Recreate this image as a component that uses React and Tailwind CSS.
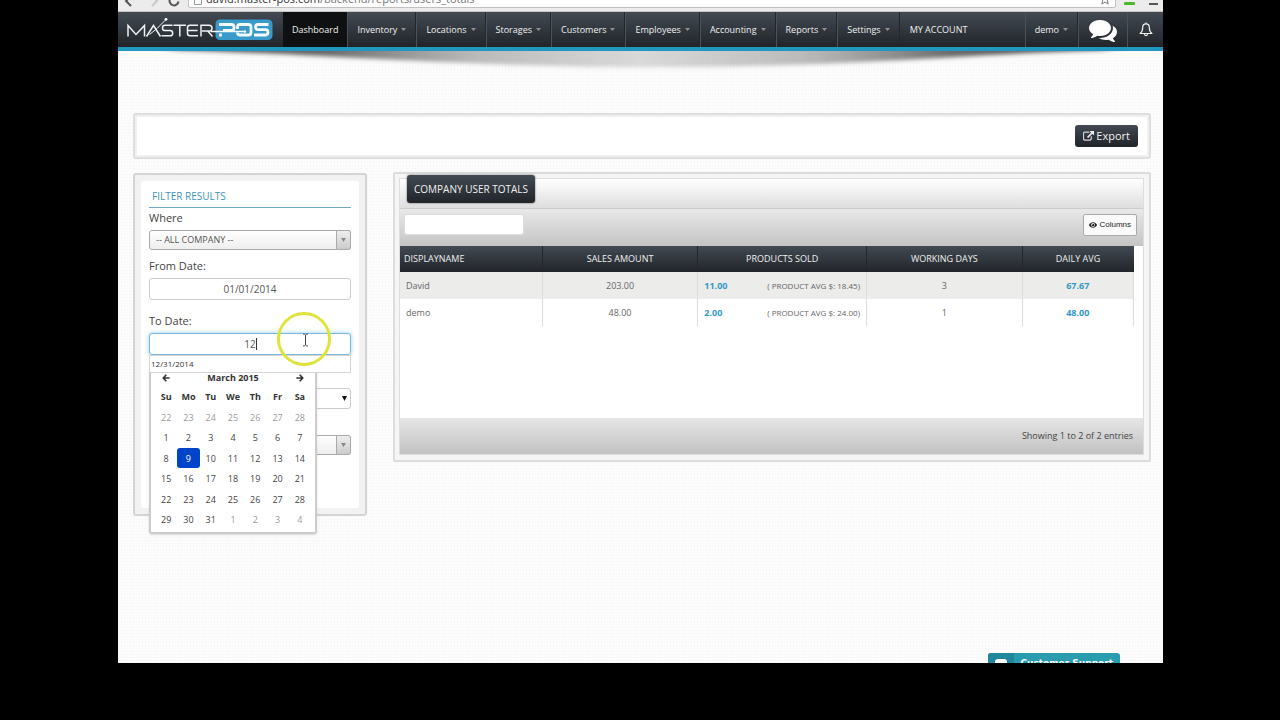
import React from "react";
import { FaEye } from "react-icons/fa";

const NAV = ["Inventory", "Locations", "Storages", "Customers", "Employees", "Accounting", "Reports", "Settings"];

const ROWS = [
  { name: "David", sales: "203.00", sold: "11.00", avg: "( PRODUCT AVG $: 18.45)", days: "3", daily: "67.67" },
  { name: "demo", sales: "48.00", sold: "2.00", avg: "( PRODUCT AVG $: 24.00)", days: "1", daily: "48.00" },
];

const WEEKDAYS = ["Su", "Mo", "Tu", "We", "Th", "Fr", "Sa"];
const WEEKS = [
  [22, 23, 24, 25, 26, 27, 28],
  [1, 2, 3, 4, 5, 6, 7],
  [8, 9, 10, 11, 12, 13, 14],
  [15, 16, 17, 18, 19, 20, 21],
  [22, 23, 24, 25, 26, 27, 28],
  [29, 30, 31, 1, 2, 3, 4],
];

function Caret({ className }) {
  return (
    <svg viewBox="0 0 6 3" preserveAspectRatio="none" className={className} aria-hidden="true">
      <path d="M0 0h6L3 3z" fill="currentColor" />
    </svg>
  );
}

function CommentsIcon() {
  return (
    <svg viewBox="0 0 1792 1792" className="size-7" fill="currentColor" aria-hidden="true">
      <path d="M1408 768q0 139-94 257t-256.5 186.5-353.5 68.5q-86 0-176-16-124 88-278 128-36 9-86 16h-3q-11 0-20.5-8t-11.5-21q-1-3-1-6.5t.5-6.5 2-6l2.5-5 3.5-5.5 4-5 4.5-5 4-4.5q5-6 23-25t26-29.5 22.5-29 25-38.5 20.5-44q-124-72-195-177t-71-224q0-139 94-257t256.5-186.5 353.5-68.5 353.5 68.5 256.5 186.5 94 257zm384 256q0 120-71 224.5t-195 176.5q10 24 20.5 44t25 38.5 22.5 29 26 29.5 23 25q1 1 4 4.5t4.5 5 4 5 3.5 5.5l2.5 5 2 6 .5 6.5-1 6.5q-3 14-13 22t-22 7q-50-7-86-16-154-40-278-128-90 16-176 16-271 0-472-132 58 4 88 4 161 0 309-45t264-129q125-92 192-212t67-254q0-77-23-152 129 71 204 178t75 230z" />
    </svg>
  );
}

function BellIcon() {
  return (
    <svg viewBox="0 0 14 15" className="h-[15px] w-[14px]" fill="none" stroke="currentColor" strokeWidth="1.2" aria-hidden="true">
      <path d="M7 1.8C4.6 1.8 3.7 3.6 3.7 5.4c0 3-.9 4.8-2.6 6.1h11.8c-1.700-1.300-2.600-3.100-2.600-6.100 0-1.800-.9-3.600-3.300-3.600z" strokeLinejoin="round" />
      <path d="M7 .4v1.400M5.500 12c.2 1.200.8 1.700 1.500 1.700s1.300-.5 1.500-1.700" />
    </svg>
  );
}

function ExportIcon() {
  return (
    <svg viewBox="0 0 1792 1792" className="size-[11px]" fill="currentColor" aria-hidden="true">
      <path d="M1408 928v320q0 119-84.500 203.500t-203.500 84.500h-832q-119 0-203.500-84.500t-84.500-203.500v-832q0-119 84.500-203.500t203.500-84.500h704q14 0 23 9t9 23v64q0 14-9 23t-23 9h-704q-66 0-113 47t-47 113v832q0 66 47 113t113 47h832q66 0 113-47t47-113v-320q0-14 9-23t23-9h64q14 0 23 9t9 23zm384-864v512q0 26-19 45t-45 19-45-19l-176-176-652 652q-10 10-23 10t-23-10l-114-114q-10-10-10-23t10-23l652-652-176-176q-19-19-19-45t19-45 45-19h512q26 0 45 19t19 45z" stroke="currentColor" strokeWidth="50" />
    </svg>
  );
}

function ArrowIcon({ className }) {
  return (
    <svg viewBox="0 0 10 10" className={className} fill="none" stroke="currentColor" strokeWidth="2" aria-hidden="true">
      <path d="M5.400 1L1.600 5l3.800 4M1.800 5h7.700" />
    </svg>
  );
}

function Logo() {
  return (
    <a href="#home" aria-label="Master POS" className="flex h-full w-[165px] shrink-0 items-center pl-2">
      <svg viewBox="0 0 148 26" className="h-[26px] w-[148px]" aria-hidden="true">
        <g fill="none" stroke="#eef1f3" strokeWidth="1.500">
          <path d="M2 19.500V8.500L10 17.500 18.500 8.500V19.500" />
          <path d="M20.500 19.500L27.500 8.500 34.500 19.500" />
          <path d="M23.500 17.500L31 11.500 39.500 3" strokeWidth="1" />
          <path d="M46.500 8.300H39q-2.500 0-2.500 2.600t2.500 2.700h5q2.700 0 2.700 2.600t-2.700 2.600H35.500" />
          <path d="M47.500 8.300h12.500M53.800 8.300V19.500" />
          <path d="M72 8.300H64q-2.500 0-2.500 2.500v5.500q0 2.500 2.500 2.500h8M61.500 13.500H71.500" />
          <path d="M75 19.500V8.300h8q3 0 3 2.900t-3 2.900h-7M82 14.200l4.500 5.300" />
        </g>
        <circle cx="40" cy="2.300" r="1.400" fill="#fff" />
        <rect x="89.500" y="2.500" width="57" height="20.500" rx="4.500" fill="#3a9aca" />
        <g fill="none" stroke="#f4fafd" strokeWidth="2.800">
          <path d="M93 7.500h12.500q2.500 0 2.500 2.500v1q0 2.500-2.500 2.500H97" />
          <path d="M94.500 16.500v3" />
          <path d="M111.500 12V10q0-2.500 2.500-2.500h8.500q2.500 0 2.500 2.500v5.500q0 2.500-2.500 2.500H114q-2.500 0-2.500-2.500" />
          <path d="M142.500 7.500H132q-2.500 0-2.500 2.500t2.500 2.700h7.500q2.500 0 2.500 2.600t-2.500 2.700H128" />
        </g>
        <path d="M85 14.500h34" stroke="#f4fafd" strokeWidth="1.300" />
        <circle cx="119" cy="14.500" r="1.200" fill="#f4fafd" />
      </svg>
    </a>
  );
}

function BrowserBar() {
  return (
    <div className="flex h-3 shrink-0 items-end overflow-hidden border-b border-[#c4c4c4] bg-[#ececec] pr-[5px] pb-[3px] text-[#555]">
      <div className="flex w-[70px] shrink-0 items-end gap-[13px] pl-[6px]">
        <svg viewBox="0 0 12 12" className="size-3" fill="none" stroke="currentColor" strokeWidth="2" aria-hidden="true">
          <path d="M7 0L2 5l5 5" />
        </svg>
        <svg viewBox="0 0 12 12" className="size-3 text-[#c8c8c8]" fill="none" stroke="currentColor" strokeWidth="2" aria-hidden="true">
          <path d="M3 0l5 5-5 5" />
        </svg>
        <svg viewBox="0 0 12 12" className="-ml-[6px] size-3" fill="none" stroke="currentColor" strokeWidth="2" aria-hidden="true">
          <path d="M10.500 5.500a4.500 4.500 0 1 1-1.500-4" />
        </svg>
      </div>
      <div className="flex h-[18px] min-w-0 flex-1 items-center rounded-[2px] border border-[#c0c0c0] bg-white px-1">
        <svg viewBox="0 0 10 12" className="h-3 w-[10px] text-[#999]" fill="none" stroke="currentColor" aria-hidden="true">
          <path d="M1.500.5h5l2 2v9h-7z" />
        </svg>
        <div className="flex-1 pl-[3px] text-[11px] leading-4 whitespace-nowrap text-[#777]">
          <span className="text-[#333]">david.master-pos.com</span>/backend/reports/users_totals
        </div>
        <svg viewBox="0 0 12 12" className="size-3 text-[#777]" fill="none" stroke="currentColor" aria-hidden="true">
          <path d="M6 1l1.500 3.500 3.500.3-2.700 2.400.9 3.800L6 9l-3.200 2 .9-3.800L1 4.800l3.500-.3z" />
        </svg>
      </div>
      <div className="ml-2 flex h-[9px] items-center gap-[14px]">
        <span className="h-[3px] w-[11px] rounded-[1px] bg-[#4db82f]" />
        <span className="h-[2px] w-[9px] bg-[#555]" />
      </div>
    </div>
  );
}

function NavLink({ children, caret }) {
  return (
    <a href="#menu" className="flex h-full items-center gap-1 border-r border-[#23272b] pr-[9px] pl-[10px] shadow-[inset_1px_0_0_#4a525a]">
      {children}
      {caret && <Caret className="h-[3px] w-[5px] text-[#8b9196]" />}
    </a>
  );
}

function HeaderShadow() {
  return (
    <svg viewBox="0 0 1045 30" preserveAspectRatio="none" className="block h-[30px] w-full overflow-hidden" aria-hidden="true">
      <defs>
        <linearGradient id="shade">
          <stop offset="0" stopColor="#333" stopOpacity="0.900" />
          <stop offset="0.180" stopColor="#444" stopOpacity="0.800" />
          <stop offset="0.330" stopColor="#777" stopOpacity="0.500" />
          <stop offset="0.500" stopColor="#999" stopOpacity="0.350" />
          <stop offset="0.670" stopColor="#777" stopOpacity="0.500" />
          <stop offset="0.820" stopColor="#444" stopOpacity="0.800" />
          <stop offset="1" stopColor="#333" stopOpacity="0.900" />
        </linearGradient>
        <filter id="soften" x="-5%" y="-50%" width="110%" height="200%">
          <feGaussianBlur stdDeviation="6 2" />
        </filter>
      </defs>
      <path d="M30 -6L60 -1C200 3 330 15 522 16S850 3 985 -1L1015 -6z" fill="url(#shade)" filter="url(#soften)" />
    </svg>
  );
}

function Header() {
  return (
    <header className="shrink-0">
      <nav className="flex h-[39px] items-center border-b-4 border-[#2097bd] bg-linear-to-b from-[#434a53] to-[#21252a] text-[9px] font-medium text-[#f0f0f0]">
        <Logo />
        <a href="#dashboard" className="flex h-full items-center bg-[#0f1012] px-[9px]">
          Dashboard
        </a>
        {NAV.map((n) => (
          <NavLink key={n} caret>
            {n}
          </NavLink>
        ))}
        <a href="#account" className="flex h-full flex-1 items-center px-[10px]">
          MY ACCOUNT
        </a>
        <NavLink caret>demo</NavLink>
        <button type="button" aria-label="Messages" className="flex h-full w-[49px] items-center justify-center border-l border-[#4a525a] text-white">
          <CommentsIcon />
        </button>
        <button type="button" aria-label="Notifications" className="flex h-full w-9 items-center justify-center border-l border-[#4a525a]">
          <BellIcon />
        </button>
      </nav>
      <HeaderShadow />
    </header>
  );
}

function SelectBox({ id, label, children }) {
  return (
    <div className="relative">
      <select
        id={id}
        aria-label={label}
        className="block h-5 w-full appearance-none rounded-[3px] border border-[#aaa] bg-linear-to-b from-white to-[#eee] pl-[6px] text-[9px] text-[#555]"
      >
        {children}
      </select>
      <span className="pointer-events-none absolute inset-y-0 right-0 flex w-[15px] items-center justify-center rounded-r-[3px] border border-[#aaa] bg-linear-to-b from-[#eee] to-[#ccc]">
        <Caret className="h-1 w-[5px] text-[#888]" />
      </span>
    </div>
  );
}

function Calendar() {
  return (
    <div className="-mt-1 w-[168px] rounded-b-[3px] border-2 border-t-0 border-[#ccc] bg-white px-1 pb-[2px] shadow-sm">
      <div className="flex h-[18px] items-center justify-between px-[7px] text-[9px] font-bold text-[#333]">
        <button type="button" aria-label="Previous month">
          <ArrowIcon className="size-2" />
        </button>
        <span>March 2015</span>
        <button type="button" aria-label="Next month">
          <ArrowIcon className="size-2 rotate-180" />
        </button>
      </div>
      <table className="h-[143px] w-full table-fixed text-center text-[9px] text-[#444]">
        <thead>
          <tr className="h-5">
            {WEEKDAYS.map((d) => (
              <th key={d} className="p-0 font-bold text-[#333]">
                {d}
              </th>
            ))}
          </tr>
        </thead>
        <tbody>
          {WEEKS.map((week, w) => (
            <tr key={w}>
              {week.map((d, i) => {
                const outside = (w === 0 && d > 20) || (w === 5 && d < 10);
                const selected = w === 2 && d === 9;
                return (
                  <td key={i} className={outside ? "p-0 text-[#999]" : "p-0"}>
                    <button
                      type="button"
                      className={selected ? "block h-5 w-full rounded-[3px] bg-[#0044cc] text-white" : "block h-5 w-full"}
                    >
                      {d}
                    </button>
                  </td>
                );
              })}
            </tr>
          ))}
        </tbody>
      </table>
    </div>
  );
}

function FilterPanel() {
  return (
    <aside className="mt-px w-[234px] shrink-0 rounded-[3px] border-2 border-[#d4d4d4] bg-[#f2f2f2] p-[6px]">
      <form className="h-[327px] rounded-[3px] bg-white px-2 pt-[6px] text-[11px] text-[#444]">
        <h2 className="border-b border-[#6fa9c4] px-[3px] pt-px pb-[3px] text-[10px] leading-4 text-[#3d94b8]">FILTER RESULTS</h2>
        <label htmlFor="where" className="mt-[2px] mb-1 block leading-4">
          Where
        </label>
        <SelectBox id="where">
          <option>-- ALL COMPANY --</option>
        </SelectBox>
        <label htmlFor="from" className="mt-2 mb-1 block leading-4">
          From Date:
        </label>
        <input
          id="from"
          defaultValue="01/01/2014"
          className="block h-[22px] w-full rounded-[3px] border border-[#ccc] bg-white text-center text-[10px] text-[#555]"
        />
        <label htmlFor="to" className="mt-[13px] mb-1 block leading-4">
          To Date:
        </label>
        <div className="relative">
          <input
            id="to"
            defaultValue="12"
            className="block h-[22px] w-full rounded-[3px] border border-[#7cb8e0] bg-white text-center text-[10px] text-[#555] shadow-[0_0_4px_#8fd0f5] outline-none"
          />
          <span className="pointer-events-none absolute inset-y-[5px] left-1/2 ml-[6px] w-px bg-[#333]" />
          <div className="absolute inset-x-0 top-full z-10">
            <div className="relative z-10 h-[18px] border border-[#d4d4d4] bg-white px-px text-[8px] leading-4 text-[#333]">12/31/2014</div>
            <Calendar />
          </div>
          <svg viewBox="0 0 56 56" className="pointer-events-none absolute -top-[22px] right-[19px] z-20 size-14" fill="none" aria-hidden="true">
            <circle cx="28" cy="28" r="25.500" stroke="#dfe33a" strokeWidth="3" />
            <path d="M27 23q2 0 2.500 1 .5-1 2.500-1M29.500 24v10M27 35q2 0 2.500-1 .5 1 2.500 1" stroke="#444" />
          </svg>
        </div>
        <div className="relative mt-[33px] mb-[26px]">
          <select aria-label="Group by" className="block h-[21px] w-full appearance-none rounded-[3px] border border-[#ccc] bg-white" />
          <span className="pointer-events-none absolute inset-y-0 right-1 flex items-center text-[#111]">
            <Caret className="h-[5px] w-[5px]" />
          </span>
        </div>
        <SelectBox label="User" />
      </form>
    </aside>
  );
}

function Totals() {
  return (
    <section className="min-w-0 flex-1 rounded-[2px] border-2 border-[#dcdcdc] bg-[#f5f5f5] pt-1 pr-[5px] pb-[5px] pl-1">
      <div className="border border-[#ddd] bg-white">
        <div className="flex h-[30px] items-start border-b border-[#ccc] bg-linear-to-b from-white to-[#dedede] pl-[7px]">
          <h2 className="-mt-1 flex h-7 items-center rounded-[3px] bg-linear-to-b from-[#434a53] to-[#21252a] px-[7px] text-[10px] text-[#f0f0f0] shadow-[0_0_2px_#555]">
            COMPANY USER TOTALS
          </h2>
        </div>
        <div className="flex h-[37px] items-start justify-between bg-linear-to-b from-[#e9e9e9] to-[#c4c4c4] pt-[5px] pr-[6px] pl-1">
          <input aria-label="Search" className="h-[21px] w-[120px] rounded-[3px] border border-[#ddd] bg-white px-1 text-[10px]" />
          <button
            type="button"
            className="flex h-[22px] items-center gap-[2px] rounded-[2px] border border-[#aaa] bg-[#fafafa] px-[5px] font-['Liberation_Sans',sans-serif] text-[8px] text-[#222]"
          >
            <FaEye className="size-2" />
            Columns
          </button>
        </div>
        <div className="h-[172px] pr-[9px]">
          <table className="w-full table-fixed border-collapse text-[9px] text-[#666]">
            <colgroup>
              <col className="w-[19.400%]" />
              <col className="w-[21.200%]" />
              <col className="w-[23%]" />
              <col className="w-[21.200%]" />
              <col className="w-[15.200%]" />
            </colgroup>
            <thead className="bg-linear-to-b from-[#434a53] to-[#21252a] text-[#f0f0f0]">
              <tr className="h-[26px]">
                <th className="p-0 pl-1 text-left font-normal">DISPLAYNAME</th>
                <th className="border-l border-[#23272b] p-0 font-normal">SALES AMOUNT</th>
                <th className="border-l border-[#23272b] p-0 font-normal">PRODUCTS SOLD</th>
                <th className="border-l border-[#23272b] p-0 font-normal">WORKING DAYS</th>
                <th className="border-l border-[#23272b] p-0 font-normal">DAILY AVG</th>
              </tr>
            </thead>
            <tbody>
              {ROWS.map((r) => (
                <tr key={r.name} className="h-[27px] text-center odd:bg-[#ececeb]">
                  <td className="p-0 pl-[6px] text-left">{r.name}</td>
                  <td className="border-l border-[#ddd] p-0">{r.sales}</td>
                  <td className="border-l border-[#ddd] px-[6px] py-0">
                    <div className="flex items-center justify-between">
                      <span className="font-bold text-[#3399c4]">{r.sold}</span>
                      <span className="text-[8px]">{r.avg}</span>
                    </div>
                  </td>
                  <td className="border-l border-[#ddd] p-0">{r.days}</td>
                  <td className="border-x border-[#ddd] p-0 font-bold text-[#3399c4]">{r.daily}</td>
                </tr>
              ))}
            </tbody>
          </table>
        </div>
        <div className="flex h-9 items-center justify-end bg-linear-to-b from-[#e6e6e6] to-[#c2c2c2] pr-[10px] text-[9px] text-[#444]">
          Showing 1 to 2 of 2 entries
        </div>
      </div>
    </section>
  );
}

export default function App() {
  return (
    <div className="flex h-screen flex-col bg-black pr-[117px] pb-[57px] pl-[118px] font-['Open_Sans',sans-serif]">
      <div className="relative flex min-h-0 flex-1 flex-col overflow-hidden bg-[#fdfdfd] bg-[linear-gradient(#f9f9f9_1px,transparent_1px),linear-gradient(90deg,#f9f9f9_1px,transparent_1px)] bg-size-[3px_3px]">
        <BrowserBar />
        <Header />
        <main className="px-[15px] pt-8 pr-3">
          <div className="flex h-[46px] items-center justify-end rounded-[3px] border-2 border-[#dedede] bg-white pr-[11px] shadow-[inset_0_0_0_2px_#f0f0f0]">
            <button
              type="button"
              className="flex h-[22px] items-center gap-[2px] rounded-[3px] bg-linear-to-b from-[#434a53] to-[#21252a] px-2 text-[11px] text-[#f0f0f0]"
            >
              <ExportIcon />
              Export
            </button>
          </div>
          <div className="mt-[13px] flex items-start gap-[26px]">
            <FilterPanel />
            <Totals />
          </div>
        </main>
        <button
          type="button"
          className="absolute right-[43px] bottom-0 flex h-[10px] items-start overflow-hidden rounded-t-[3px] bg-[#2a9cb2] pr-[7px] font-['DejaVu_Sans',sans-serif] text-[9px] leading-5 font-bold text-white"
        >
          <span className="mr-[6px] flex h-5 w-[26px] justify-center bg-[#20879c] pt-[6px]">
            <span className="h-3 w-3 rounded-[3px] bg-white" />
          </span>
          Customer Support
        </button>
      </div>
    </div>
  );
}
